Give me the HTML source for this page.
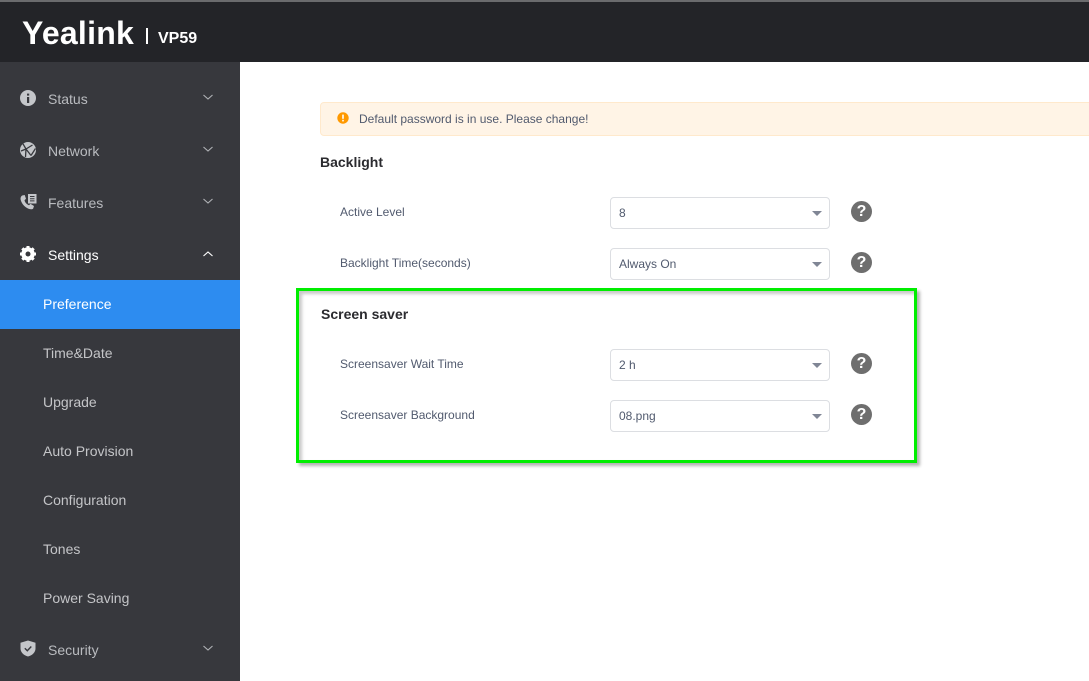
<!DOCTYPE html>
<html><head><meta charset="utf-8"><style>
html,body{margin:0;padding:0;background:#fff}
body{width:1089px;height:681px;position:relative;overflow:hidden;font-family:"Liberation Sans",Arial,sans-serif}
.a{position:absolute;white-space:nowrap}
#top{left:0;top:0;width:1089px;height:62px;background:#232428}
#stripe{left:0;top:0;width:1089px;height:2px;background:#6a6b6d}
#side{left:0;top:62px;width:240px;height:619px;background:#37383d}
.m{left:48px;font-size:14px;line-height:16px;color:#b9bbbf}
.s{left:43px;font-size:14px;line-height:16px;color:#c4c5c8}
.lab{left:340px;font-size:12px;line-height:14px;color:#515a6e}
.h{font-size:14px;font-weight:bold;line-height:16px;color:#2b2b2f}
.sel{left:610px;width:218px;height:30px;border:1px solid #dcdee2;border-radius:4px;background:#fff}
.sel span{position:absolute;left:8px;top:8px;font-size:12px;line-height:14px;color:#515a6e}
.sel i{position:absolute;right:7px;top:13px;width:0;height:0;border-left:5px solid transparent;border-right:5px solid transparent;border-top:5px solid #808695}
.q{left:851px;width:21px;height:21px;border-radius:50%;background:#6e6e6e;color:#fff;font-size:16px;font-weight:bold;line-height:21px;text-align:center}
svg{position:absolute;overflow:visible}
</style></head><body>
<div class="a" id="top"></div><div class="a" id="stripe"></div>
<div class="a" style="left:22px;top:15px;font-size:32px;line-height:36px;font-weight:bold;color:#fff;letter-spacing:.25px">Yealink</div>
<div class="a" style="left:146px;top:28px;width:2px;height:16px;background:#fff"></div>
<div class="a" style="left:158px;top:30px;font-size:16px;line-height:18px;font-weight:bold;color:#fff">VP59</div>
<div class="a" id="side"></div>

<svg style="left:20px;top:90px" width="16" height="16" viewBox="0 0 16 16"><circle cx="8" cy="8" r="8" fill="#c4c6ca"/><rect x="7" y="7" width="2.2" height="6" fill="#37383d"/><rect x="7" y="3.6" width="2.2" height="2" fill="#37383d"/></svg>
<svg style="left:20px;top:142px" width="16" height="16" viewBox="0 0 16 16"><circle cx="8" cy="8" r="8" fill="#c4c6ca"/><path d="M3 1.8 6 7 1 9M6 7l6.5-4M6 7l5 6.5M6 7l-.5 8M11 13.500 15.500 6.500" stroke="#37383d" stroke-width="1.300" fill="none"/></svg>
<svg style="left:20px;top:194px" width="17" height="16" viewBox="0 0 17 16"><path d="M2.200 1.500 4.700 1 6 4.800 4.500 6.200C5 8.500 6.700 10.300 9 11.200L10.500 9.900 14 12 13.200 14.500C12.500 15.500 10.500 15.500 8.500 14.700 4.500 13 1.500 9.500.6 5.500.3 3.800 1 2.200 2.200 1.500Z" fill="#c4c6ca"/><rect x="8" y="0" width="8.500" height="9.500" fill="#c4c6ca"/><path d="M10 2.500h4.500M10 4.700h4.500M10 6.900h4.500" stroke="#37383d" stroke-width="1"/></svg>
<svg style="left:20px;top:246px" width="16" height="16" viewBox="0 0 16 16"><circle cx="8" cy="8" r="5" fill="none" stroke="#fff" stroke-width="3.400"/><path d="M8 0V16M0 8H16M2.300 2.300 13.700 13.700M13.700 2.300 2.300 13.700" stroke="#fff" stroke-width="3"/><circle cx="8" cy="8" r="2.500" fill="#37383d"/></svg>
<svg style="left:20px;top:640px" width="16" height="17" viewBox="0 0 16 17"><path d="M8 .5 15.500 2.800V8.500C15.500 12.500 12 15.500 8 16.500 4 15.500.5 12.500.5 8.500V2.800Z" fill="#c4c6ca"/><path d="M4.800 8.300 7.300 10.700 11.300 6.500" stroke="#37383d" stroke-width="1.400" fill="none"/></svg>

<svg style="left:202px;top:94px" width="12" height="7"><path d="M1.500 1 6 5 10.500 1" fill="none" stroke="#b0b2b6" stroke-width="1.100"/></svg>
<svg style="left:202px;top:146px" width="12" height="7"><path d="M1.500 1 6 5 10.500 1" fill="none" stroke="#b0b2b6" stroke-width="1.100"/></svg>
<svg style="left:202px;top:198px" width="12" height="7"><path d="M1.500 1 6 5 10.500 1" fill="none" stroke="#b0b2b6" stroke-width="1.100"/></svg>
<svg style="left:202px;top:250px" width="12" height="7"><path d="M1.500 6 6 2 10.500 6" fill="none" stroke="#fff" stroke-width="1.100"/></svg>
<svg style="left:202px;top:645px" width="12" height="7"><path d="M1.500 1 6 5 10.500 1" fill="none" stroke="#b0b2b6" stroke-width="1.100"/></svg>

<div class="a m" style="top:91px">Status</div>
<div class="a m" style="top:143px">Network</div>
<div class="a m" style="top:195px">Features</div>
<div class="a m" style="top:247px;color:#fff">Settings</div>
<div class="a" style="left:0;top:280px;width:240px;height:49px;background:#2d8cf0"></div>
<div class="a s" style="top:296px;color:#fff">Preference</div>
<div class="a s" style="top:345px">Time&amp;Date</div>
<div class="a s" style="top:394px">Upgrade</div>
<div class="a s" style="top:443px">Auto Provision</div>
<div class="a s" style="top:492px">Configuration</div>
<div class="a s" style="top:541px">Tones</div>
<div class="a s" style="top:590px">Power Saving</div>
<div class="a m" style="top:642px">Security</div>

<div class="a" style="left:320px;top:102px;width:775px;height:32px;background:#fff4e6;border:1px solid #ffe9cc;border-radius:4px"></div>
<svg style="left:337px;top:112px" width="12" height="12" viewBox="0 0 12 12"><circle cx="6" cy="6" r="5.700" fill="#ff9900"/><rect x="5.200" y="2.600" width="1.600" height="4.200" fill="#fff"/><rect x="5.200" y="7.800" width="1.600" height="1.600" fill="#fff"/></svg>
<div class="a" style="left:359px;top:112px;font-size:12px;line-height:14px;color:#515a6e">Default password is in use. Please change!</div>

<div class="a h" style="left:320px;top:154px">Backlight</div>
<div class="a lab" style="top:205px">Active Level</div>
<div class="a sel" style="top:197px"><span>8</span><i></i></div>
<div class="a q" style="top:201px">?</div>
<div class="a lab" style="top:256px">Backlight Time(seconds)</div>
<div class="a sel" style="top:248px"><span>Always On</span><i></i></div>
<div class="a q" style="top:252px">?</div>

<div class="a h" style="left:321px;top:306px">Screen saver</div>
<div class="a lab" style="top:357px">Screensaver Wait Time</div>
<div class="a sel" style="top:349px"><span>2 h</span><i></i></div>
<div class="a q" style="top:353px">?</div>
<div class="a lab" style="top:408px">Screensaver Background</div>
<div class="a sel" style="top:400px"><span>08.png</span><i></i></div>
<div class="a q" style="top:404px">?</div>

<div class="a" style="left:296px;top:288px;width:615px;height:169px;border:3px solid #00ee00;box-shadow:3px 3px 3px rgba(0,0,0,.3),inset 3px 3px 3px rgba(0,0,0,.22)"></div>
</body></html>
